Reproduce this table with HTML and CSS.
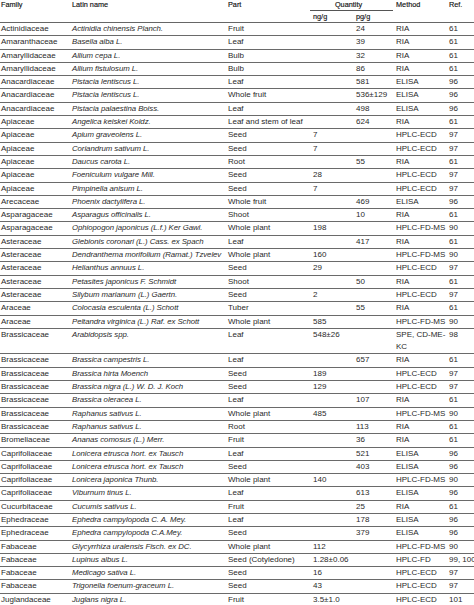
FILE: index.html
```html
<!DOCTYPE html>
<html>
<head>
<meta charset="utf-8">
<link rel="stylesheet" href="styles.css">
</head>
<body>
<table class="tbl">
<colgroup>
<col class="c-fam"><col class="c-lat"><col class="c-part"><col class="c-ng"><col class="c-pg"><col class="c-meth"><col class="c-ref">
</colgroup>
<thead>
<tr class="h1">
<th class="fam">Family</th><th class="lat">Latin name</th><th class="part">Part</th><th class="qty" colspan="2">Quantity</th><th class="meth">Method</th><th class="ref">Ref.</th>
</tr>
<tr class="h2">
<th></th><th></th><th></th><th class="ng">ng/g</th><th class="pg">pg/g</th><th></th><th></th>
</tr>
</thead>
<tbody>
<tr><td class="fam">Actinidiaceae</td><td class="lat">Actinidia chinensis Planch.</td><td class="part">Fruit</td><td class="ng"></td><td class="pg">24</td><td class="meth">RIA</td><td class="ref">61</td></tr>
<tr><td class="fam">Amaranthaceae</td><td class="lat">Basella alba L.</td><td class="part">Leaf</td><td class="ng"></td><td class="pg">39</td><td class="meth">RIA</td><td class="ref">61</td></tr>
<tr><td class="fam">Amaryllidaceae</td><td class="lat">Allium cepa L.</td><td class="part">Bulb</td><td class="ng"></td><td class="pg">32</td><td class="meth">RIA</td><td class="ref">61</td></tr>
<tr><td class="fam">Amaryllidaceae</td><td class="lat">Allium fistulosum L.</td><td class="part">Bulb</td><td class="ng"></td><td class="pg">86</td><td class="meth">RIA</td><td class="ref">61</td></tr>
<tr><td class="fam">Anacardiaceae</td><td class="lat">Pistacia lentiscus L.</td><td class="part">Leaf</td><td class="ng"></td><td class="pg">581</td><td class="meth">ELISA</td><td class="ref">96</td></tr>
<tr><td class="fam">Anacardiaceae</td><td class="lat">Pistacia lentiscus L.</td><td class="part">Whole fruit</td><td class="ng"></td><td class="pg">536±129</td><td class="meth">ELISA</td><td class="ref">96</td></tr>
<tr><td class="fam">Anacardiaceae</td><td class="lat">Pistacia palaestina Boiss.</td><td class="part">Leaf</td><td class="ng"></td><td class="pg">498</td><td class="meth">ELISA</td><td class="ref">96</td></tr>
<tr><td class="fam">Apiaceae</td><td class="lat">Angelica keiskei Koidz.</td><td class="part">Leaf and stem of leaf</td><td class="ng"></td><td class="pg">624</td><td class="meth">RIA</td><td class="ref">61</td></tr>
<tr><td class="fam">Apiaceae</td><td class="lat">Apium graveolens L.</td><td class="part">Seed</td><td class="ng">7</td><td class="pg"></td><td class="meth">HPLC-ECD</td><td class="ref">97</td></tr>
<tr><td class="fam">Apiaceae</td><td class="lat">Coriandrum sativum L.</td><td class="part">Seed</td><td class="ng">7</td><td class="pg"></td><td class="meth">HPLC-ECD</td><td class="ref">97</td></tr>
<tr><td class="fam">Apiaceae</td><td class="lat">Daucus carota L.</td><td class="part">Root</td><td class="ng"></td><td class="pg">55</td><td class="meth">RIA</td><td class="ref">61</td></tr>
<tr><td class="fam">Apiaceae</td><td class="lat">Foeniculum vulgare Mill.</td><td class="part">Seed</td><td class="ng">28</td><td class="pg"></td><td class="meth">HPLC-ECD</td><td class="ref">97</td></tr>
<tr><td class="fam">Apiaceae</td><td class="lat">Pimpinella anisum L.</td><td class="part">Seed</td><td class="ng">7</td><td class="pg"></td><td class="meth">HPLC-ECD</td><td class="ref">97</td></tr>
<tr><td class="fam">Arecaceae</td><td class="lat">Phoenix dactylifera L.</td><td class="part">Whole fruit</td><td class="ng"></td><td class="pg">469</td><td class="meth">ELISA</td><td class="ref">96</td></tr>
<tr><td class="fam">Asparagaceae</td><td class="lat">Asparagus officinalis L.</td><td class="part">Shoot</td><td class="ng"></td><td class="pg">10</td><td class="meth">RIA</td><td class="ref">61</td></tr>
<tr><td class="fam">Asparagaceae</td><td class="lat">Ophiopogon japonicus (L.f.) Ker Gawl.</td><td class="part">Whole plant</td><td class="ng">198</td><td class="pg"></td><td class="meth">HPLC-FD-MS</td><td class="ref">90</td></tr>
<tr><td class="fam">Asteraceae</td><td class="lat">Glebionis coronari (L.) Cass. ex Spach</td><td class="part">Leaf</td><td class="ng"></td><td class="pg">417</td><td class="meth">RIA</td><td class="ref">61</td></tr>
<tr><td class="fam">Asteraceae</td><td class="lat">Dendranthema morifolium (Ramat.) Tzvelev</td><td class="part">Whole plant</td><td class="ng">160</td><td class="pg"></td><td class="meth">HPLC-FD-MS</td><td class="ref">90</td></tr>
<tr><td class="fam">Asteraceae</td><td class="lat">Helianthus annuus L.</td><td class="part">Seed</td><td class="ng">29</td><td class="pg"></td><td class="meth">HPLC-ECD</td><td class="ref">97</td></tr>
<tr><td class="fam">Asteraceae</td><td class="lat">Petasites japonicus F. Schmidt</td><td class="part">Shoot</td><td class="ng"></td><td class="pg">50</td><td class="meth">RIA</td><td class="ref">61</td></tr>
<tr><td class="fam">Asteraceae</td><td class="lat">Silybum marianum (L.) Gaertn.</td><td class="part">Seed</td><td class="ng">2</td><td class="pg"></td><td class="meth">HPLC-ECD</td><td class="ref">97</td></tr>
<tr><td class="fam">Araceae</td><td class="lat">Colocasia esculenta (L.) Schott</td><td class="part">Tuber</td><td class="ng"></td><td class="pg">55</td><td class="meth">RIA</td><td class="ref">61</td></tr>
<tr><td class="fam">Araceae</td><td class="lat">Peltandra virginica (L.) Raf. ex Schott</td><td class="part">Whole plant</td><td class="ng">585</td><td class="pg"></td><td class="meth">HPLC-FD-MS</td><td class="ref">90</td></tr>
<tr><td class="fam">Brassicaceae</td><td class="lat">Arabidopsis spp.</td><td class="part">Leaf</td><td class="ng">548±26</td><td class="pg"></td><td class="meth">SPE, CD-ME-<br>KC</td><td class="ref">98</td></tr>
<tr><td class="fam">Brassicaceae</td><td class="lat">Brassica campestris L.</td><td class="part">Leaf</td><td class="ng"></td><td class="pg">657</td><td class="meth">RIA</td><td class="ref">61</td></tr>
<tr><td class="fam">Brassicaceae</td><td class="lat">Brassica hirta Moench</td><td class="part">Seed</td><td class="ng">189</td><td class="pg"></td><td class="meth">HPLC-ECD</td><td class="ref">97</td></tr>
<tr><td class="fam">Brassicaceae</td><td class="lat">Brassica nigra (L.) W. D. J. Koch</td><td class="part">Seed</td><td class="ng">129</td><td class="pg"></td><td class="meth">HPLC-ECD</td><td class="ref">97</td></tr>
<tr><td class="fam">Brassicaceae</td><td class="lat">Brassica oleracea L.</td><td class="part">Leaf</td><td class="ng"></td><td class="pg">107</td><td class="meth">RIA</td><td class="ref">61</td></tr>
<tr><td class="fam">Brassicaceae</td><td class="lat">Raphanus sativus L.</td><td class="part">Whole plant</td><td class="ng">485</td><td class="pg"></td><td class="meth">HPLC-FD-MS</td><td class="ref">90</td></tr>
<tr><td class="fam">Brassicaceae</td><td class="lat">Raphanus sativus L.</td><td class="part">Root</td><td class="ng"></td><td class="pg">113</td><td class="meth">RIA</td><td class="ref">61</td></tr>
<tr><td class="fam">Bromeliaceae</td><td class="lat">Ananas comosus (L.) Merr.</td><td class="part">Fruit</td><td class="ng"></td><td class="pg">36</td><td class="meth">RIA</td><td class="ref">61</td></tr>
<tr><td class="fam">Caprifoliaceae</td><td class="lat">Lonicera etrusca hort. ex Tausch</td><td class="part">Leaf</td><td class="ng"></td><td class="pg">521</td><td class="meth">ELISA</td><td class="ref">96</td></tr>
<tr><td class="fam">Caprifoliaceae</td><td class="lat">Lonicera etrusca hort. ex Tausch</td><td class="part">Seed</td><td class="ng"></td><td class="pg">403</td><td class="meth">ELISA</td><td class="ref">96</td></tr>
<tr><td class="fam">Caprifoliaceae</td><td class="lat">Lonicera japonica Thunb.</td><td class="part">Whole plant</td><td class="ng">140</td><td class="pg"></td><td class="meth">HPLC-FD-MS</td><td class="ref">90</td></tr>
<tr><td class="fam">Caprifoliaceae</td><td class="lat">Viburnum tinus L.</td><td class="part">Leaf</td><td class="ng"></td><td class="pg">613</td><td class="meth">ELISA</td><td class="ref">96</td></tr>
<tr><td class="fam">Cucurbitaceae</td><td class="lat">Cucumis sativus L.</td><td class="part">Fruit</td><td class="ng"></td><td class="pg">25</td><td class="meth">RIA</td><td class="ref">61</td></tr>
<tr><td class="fam">Ephedraceae</td><td class="lat">Ephedra campylopoda C. A. Mey.</td><td class="part">Leaf</td><td class="ng"></td><td class="pg">178</td><td class="meth">ELISA</td><td class="ref">96</td></tr>
<tr><td class="fam">Ephedraceae</td><td class="lat">Ephedra campylopoda C.A.Mey.</td><td class="part">Seed</td><td class="ng"></td><td class="pg">379</td><td class="meth">ELISA</td><td class="ref">96</td></tr>
<tr><td class="fam">Fabaceae</td><td class="lat">Glycyrrhiza uralensis Fisch. ex DC.</td><td class="part">Whole plant</td><td class="ng">112</td><td class="pg"></td><td class="meth">HPLC-FD-MS</td><td class="ref">90</td></tr>
<tr><td class="fam">Fabaceae</td><td class="lat">Lupinus albus L.</td><td class="part">Seed (Cotyledone)</td><td class="ng">1.28±0.06</td><td class="pg"></td><td class="meth">HPLC-FD</td><td class="ref">99, 100</td></tr>
<tr><td class="fam">Fabaceae</td><td class="lat">Medicago sativa L.</td><td class="part">Seed</td><td class="ng">16</td><td class="pg"></td><td class="meth">HPLC-ECD</td><td class="ref">97</td></tr>
<tr><td class="fam">Fabaceae</td><td class="lat">Trigonella foenum-graceum L.</td><td class="part">Seed</td><td class="ng">43</td><td class="pg"></td><td class="meth">HPLC-ECD</td><td class="ref">97</td></tr>
<tr><td class="fam">Juglandaceae</td><td class="lat">Juglans nigra L.</td><td class="part">Fruit</td><td class="ng">3.5±1.0</td><td class="pg"></td><td class="meth">HPLC-ECD</td><td class="ref">101</td></tr>
</tbody>
</table>
</body>
</html>
```

FILE: styles.css
```css
html, body {
  margin: 0;
  padding: 0;
  background: #fff;
  overflow: hidden;
}
body {
  font-family: "Liberation Sans", Arial, sans-serif;
  color: #2a2a2a;
  font-size: 8px;
}
.tbl {
  border-collapse: collapse;
  table-layout: fixed;
  width: 480px;
}
.c-fam { width: 72px; }
.c-lat { width: 156px; }
.c-part { width: 82px; }
.c-ng { width: 43px; }
.c-pg { width: 40px; }
.c-meth { width: 54px; }
.c-ref { width: 33px; }

th, td {
  padding: 0;
  text-align: left;
  vertical-align: top;
  white-space: nowrap;
  overflow: visible;
}
th {
  font-weight: normal;
  font-size: 7.3px;
  color: #111;
  -webkit-text-stroke: 0.15px #111;
}
.h1 th { line-height: 10px; }
.h2 th { line-height: 11px; border-bottom: 1px solid #666; }
.h1 .qty {
  text-align: center;
  border-bottom: 1px solid #555;
  padding-right: 6px;
}
td {
  line-height: 12.3px;
  border-bottom: 1px solid #6a6a6a;
}
.fam { padding-left: 1px; }
.lat { padding-left: 0; }
td.lat {
  font-style: italic;
  font-size: 7.8px;
  letter-spacing: -0.05px;
}
.part { padding-left: 0; }
.ng { padding-left: 3px; }
.pg { padding-left: 3px; }
.meth { padding-left: 3px; white-space: normal; }
.ref { padding-left: 2px; }
```
